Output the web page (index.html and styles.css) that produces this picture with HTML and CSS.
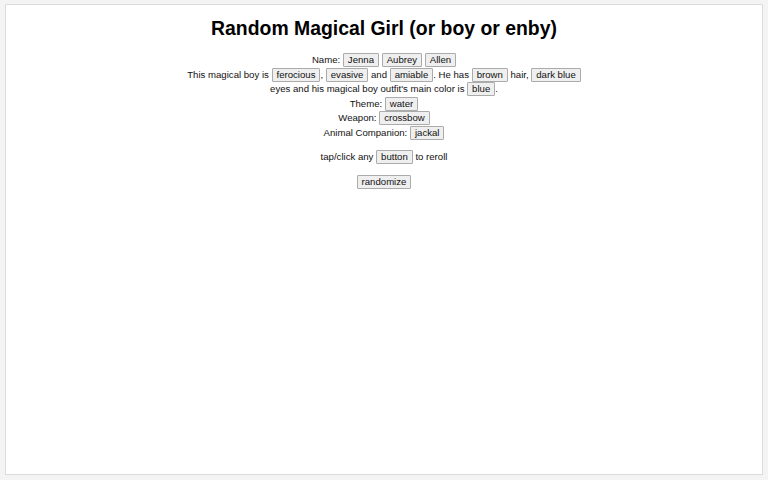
FILE: index.html
```html
<!DOCTYPE html>
<html>
<head lang="en">
    <meta charset="UTF-8">
    <title>Random Magical Girl</title>
    <link rel="stylesheet" href="styles.css">
</head>
<body>
<div id="container">
    <h1>Random Magical Girl (or boy or enby)</h1>
    <div id="result">
        <p>Name: <button>Jenna</button> <button>Aubrey</button> <button>Allen</button></p>
        <p>This magical boy is <button>ferocious</button>, <button>evasive</button> and <button>amiable</button>. He has <button>brown</button> hair, <button>dark blue</button> eyes and his magical boy outfit's main color is <button>blue</button>.</p>
        <p>Theme: <button>water</button></p>
        <p>Weapon: <button>crossbow</button></p>
        <p>Animal Companion: <button>jackal</button></p>
    </div>
    <p class="hint">tap/click any <button>button</button> to reroll</p>
    <p class="hint"><button id="randomize">randomize</button></p>
</div>
</body>
</html>
```

FILE: styles.css
```css
* {
    padding: 0;
    margin: 0;
}

html {
    background: #f4f4f4;
}

body {
    padding: 4px 5px 5px 5px;
    font-family: "Liberation Sans", Arial, sans-serif;
    font-size: 9.6px;
    color: #111;
}

#container {
    background: #ffffff;
    border: 1px solid #dcdcdc;
    height: 469px;
    text-align: center;
    width: 756px;
}

h1 {
    font-size: 19.4px;
    margin: 12px 0 13px 0;
    color: #000;
}

#result {
    width: 400px;
    margin: 0 auto;
}

#result p {
    line-height: 14.5px;
}

.hint {
    line-height: 14.5px;
    margin-top: 10px;
}

button {
    font-family: "Liberation Sans", Arial, sans-serif;
    font-size: 9.6px;
    color: #111;
    background: #efefef;
    border: 1px solid #ababab;
    border-radius: 1px;
    padding: 1px 4px;
    line-height: 10px;
}
```
